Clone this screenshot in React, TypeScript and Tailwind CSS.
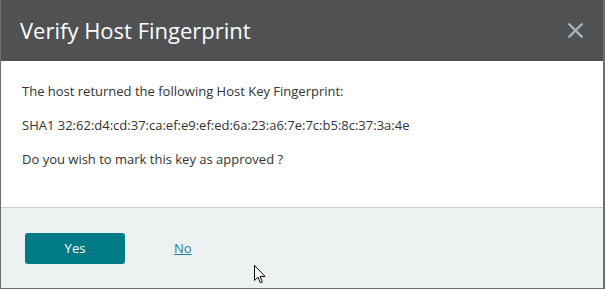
import React from 'react';

const App: React.FC = () => {
  return (
    <div
      className="relative w-[605px] h-[289px] bg-[#6b6d6f] overflow-hidden"
      style={{ fontFamily: '"Open Sans", "Liberation Sans", sans-serif' }}
    >
      <div className="ml-px mr-[2px] h-[288px] flex flex-col">
        <div className="h-[61px] bg-[#4f5153] flex items-center justify-between pl-[19px] pr-[19px]">
          <h1 className="text-[22px] text-white leading-none pb-[1px]">Verify Host Fingerprint</h1>
          <svg className="w-[17px] h-[17px]" viewBox="0 0 17 17" fill="none" stroke="#aab4bc" strokeWidth="2.4">
            <path d="M1.5 1.5 L15.5 15.5 M15.5 1.5 L1.5 15.5" />
          </svg>
        </div>
        <div className="h-[147px] bg-white border-b border-[#c9d1d5] pl-[21px] pt-[22px] text-[13px] text-[#333333] flex flex-col gap-[18px] leading-[16px]">
          <p>The host returned the following Host Key Fingerprint:</p>
          <p>SHA1 32:62:d4:cd:37:ca:ef:e9:ef:ed:6a:23:a6:7e:7c:b5:8c:37:3a:4e</p>
          <p>Do you wish to mark this key as approved ?</p>
        </div>
        <div className="flex-1 bg-[#eef1f2] flex items-start pl-[24px] pt-[25px] gap-[49px]">
          <button className="w-[100px] h-[31px] rounded-[3px] bg-[#007a85] text-white text-[13px]">Yes</button>
          <a href="#" className="text-[13px] text-[#1f7f97] underline mt-[6px]">No</a>
        </div>
      </div>
      <svg className="absolute left-[254px] top-[265px]" width="12" height="19" viewBox="0 0 12 19">
        <path d="M0.5 0.5 L0.5 15.5 L4 12.2 L6.3 17.8 L8.4 16.9 L6.1 11.4 L11 11.4 Z" fill="#ffffff" stroke="#000000" strokeWidth="1" />
      </svg>
    </div>
  );
};

export default App;
